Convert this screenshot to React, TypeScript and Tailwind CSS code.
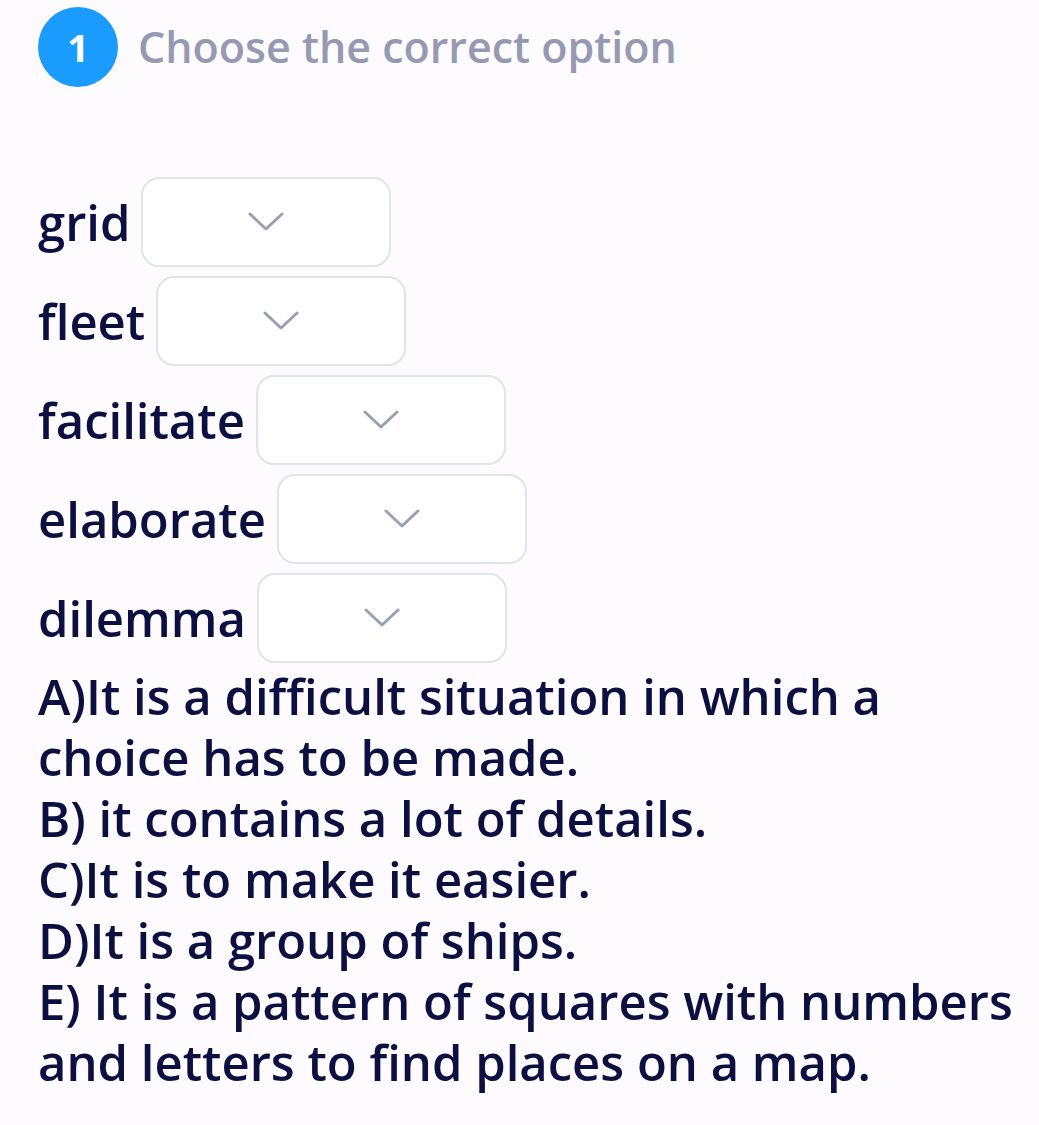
const rows = ["grid", "fleet", "facilitate", "elaborate", "dilemma"];

const options = [
  "A)It is a difficult situation in which a choice has to be made.",
  "B) it contains a lot of details.",
  "C)It is to make it easier.",
  "D)It is a group of ships.",
  "E) It is a pattern of squares with numbers and letters to find places on a map.",
];

const Chevron = () => (
  <svg width="36" height="20" viewBox="0 0 36 20" fill="none">
    <path d="M2 2 L18 17 L34 2" stroke="#9a9fb1" strokeWidth="3" strokeLinecap="round" strokeLinejoin="round" />
  </svg>
);

const App = () => {
  return (
    <div
      className="min-h-screen bg-[#fdfbfe] text-[#0b1040] pl-[38px] [font-variant-ligatures:none]"
      style={{ fontFamily: "'Open Sans', Lato, sans-serif" }}
    >
      <div className="flex items-center gap-[20px] pt-[7px]">
        <div className="w-[80px] h-[80px] rounded-full bg-[#1a9cff] flex items-center justify-center text-white text-[38px] font-bold">
          1
        </div>
        <div className="text-[43px] font-semibold text-[#959ab2]">Choose the correct option</div>
      </div>

      <div className="mt-[90px] flex flex-col gap-[9px]">
        {rows.map((r) => (
          <div key={r} className="flex items-center gap-[11px]">
            <span className="text-[49px] font-semibold leading-none">{r}</span>
            <div className="w-[250px] h-[90px] rounded-[18px] border-2 border-[#e3e3ec] bg-white flex items-center justify-center">
              <Chevron />
            </div>
          </div>
        ))}
      </div>

      <div className="mt-[3px] w-[996px] text-[49px] font-semibold leading-[61px]">
        {options.map((o) => (
          <p key={o}>{o}</p>
        ))}
      </div>
    </div>
  );
};

export default App;
